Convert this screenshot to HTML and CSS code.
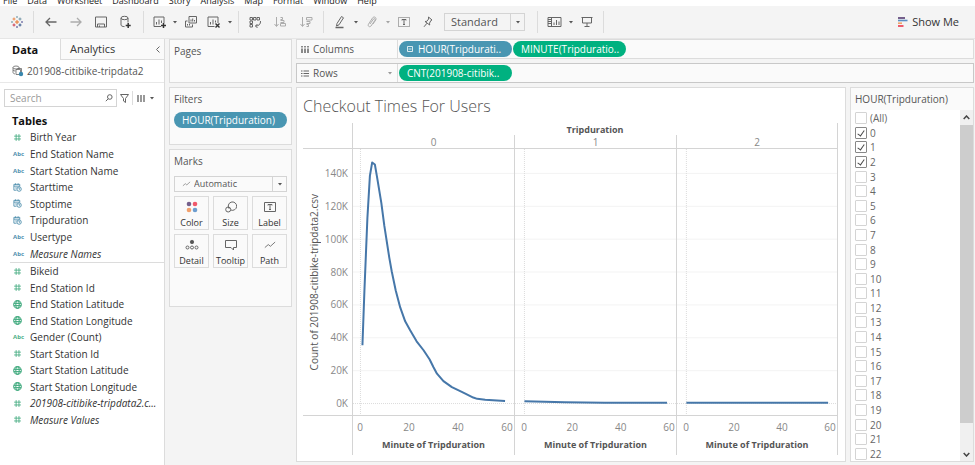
FILE: index.html
```html
<!DOCTYPE html>
<html lang="en">
<head>
    <meta charset="UTF-8">
    <meta name="viewport" content="width=device-width, initial-scale=1.0">
    <title>Checkout Times For Users</title>
    <link rel="stylesheet" href="styles.css">
</head>
<body>
    <!-- shared icons -->
    <svg class="icon-defs" aria-hidden="true">
        <symbol id="hash" viewBox="0 0 8 8"><path d="M2.8 1v6M5.3 1v6M1 2.8h6M1 5.3h6" stroke-width=".8"/></symbol>
        <symbol id="globe" viewBox="0 0 8 8"><circle cx="4" cy="4" r="3.4"/><ellipse cx="4" cy="4" rx="1.5" ry="3.4"/><path d="M.8 3h6.4M.8 5h6.4"/></symbol>
        <symbol id="date" viewBox="0 0 10 10"><path d="M4 8H1V1.5h6.5V4M1 3.5h6.5M2.8.4v1.8M5.7.4v1.8M2.5 5.5h1.8"/><circle cx="6.8" cy="6.8" r="2.4"/><path d="M6.8 5.5v1.4h1.1"/></symbol>
        <symbol id="caret" viewBox="0 0 4 3"><path d="M0 0h4L2 2.6z"/></symbol>
        <symbol id="line" viewBox="0 0 14 10"><path d="M1 8l4-3.5 2.5 2L13 1.5"/></symbol>
    </svg>

    <nav class="menu">
        <a href="#">File</a>
        <a href="#">Data</a>
        <a href="#">Worksheet</a>
        <a href="#">Dashboard</a>
        <a href="#">Story</a>
        <a href="#">Analysis</a>
        <a href="#">Map</a>
        <a href="#">Format</a>
        <a href="#">Window</a>
        <a href="#">Help</a>
    </nav>

    <header class="toolbar">
        <div class="group group-logo">
            <button aria-label="Start page"><svg width="12" height="12" viewBox="0 0 12 12">
                <path d="M6 4v4M4 6h4" stroke="#e8762d"/>
                <path d="M3 1.5v3M1.5 3h3" stroke="#e8762d" stroke-width=".8"/>
                <path d="M9 1.5v3M7.5 3h3" stroke="#5b879b" stroke-width=".8"/>
                <path d="M3 7.5v3M1.5 9h3" stroke="#c72037" stroke-width=".8"/>
                <path d="M9 7.5v3M7.5 9h3" stroke="#1f457e" stroke-width=".8"/>
                <path d="M6 0v2M5 1h2M0 6h2M1 5v2" stroke="#7199a6" stroke-width=".7"/>
                <path d="M6 10v2M5 11h2M10 6h2M11 5v2" stroke="#59569a" stroke-width=".7"/>
            </svg></button>
        </div>
        <div class="group group-file">
            <button aria-label="Undo"><svg width="12" height="10" viewBox="0 0 12 10"><path d="M5 1L1 5l4 4M1 5h10.5" stroke-width="1.3"/></svg></button>
            <button aria-label="Redo" class="off"><svg width="12" height="10" viewBox="0 0 12 10"><path d="M7 1l4 4-4 4M11 5H.5" stroke-width="1.3"/></svg></button>
            <button aria-label="Save"><svg width="12" height="12" viewBox="0 0 12 12"><path d="M.5 1h11v10H.5zM2.5 11V8h7v3M4.500 9.500V11"/></svg></button>
            <button aria-label="New data source"><svg width="12" height="14" viewBox="0 0 12 14"><ellipse cx="4.5" cy="3" rx="3.5" ry="1.7"/><path d="M1 3v7c0 .9 1.5 1.6 3.5 1.6M8 3v4.5"/><path d="M8.2 8v5M5.7 10.5h5" stroke="#333" stroke-width="1.5"/></svg></button>
        </div>
        <div class="group group-sheet">
            <button aria-label="New worksheet"><svg width="14" height="14" viewBox="0 0 14 14"><path d="M8 11.5H1V2h10v6M3.5 9.5V7M6 9.5V4.5M8.5 8V5.5"/><path d="M10.5 8v5M8 10.5h5" stroke="#333" stroke-width="1.5"/></svg></button>
            <button class="drop" aria-label="Worksheet options"><svg class="caret"><use href="#caret"/></svg></button>
            <button aria-label="Duplicate"><svg width="14" height="14" viewBox="0 0 14 14"><path d="M5 1.5h7.5V8H5zM7 6.5v-2M8.7 6.5v-3M10.5 6.5V5M3.5 6h-2v6h7V9.5M3.5 10.5V9M5.5 10.5V9"/></svg></button>
            <button aria-label="Clear sheet"><svg width="14" height="14" viewBox="0 0 14 14"><path d="M7.5 11.5H1V2h10v6M3.5 9.5V7M6 9.5V4.5M8.5 7.5v-2"/><path d="M8.5 8.5l4 4M12.5 8.5l-4 4" stroke="#333" stroke-width="1.4"/></svg></button>
            <button class="drop" aria-label="Clear options"><svg class="caret"><use href="#caret"/></svg></button>
        </div>
        <div class="group group-sort">
            <button aria-label="Swap rows and columns"><svg width="13" height="13" viewBox="0 0 13 13"><path d="M1 1.5h2.5V4H1zM4.500 1.5H7V4H4.500zM8 1.5h2.500V4H8zM1 5h2.500v2.500H1zM1 8.500h2.500V11H1zM11.500 5c.3 3-1.500 5-5 5M8.500 8l-2 2 2 2"/></svg></button>
            <button aria-label="Sort ascending" class="off"><svg width="13" height="12" viewBox="0 0 13 12"><path d="M2.5 1v9M.5 8l2 2.500 2-2.500M6.500 1.500h2v2h-2M6.500 4.500h3.500v2H6.500M6.500 7.500h5v2.500h-5z"/></svg></button>
            <button aria-label="Sort descending" class="off"><svg width="13" height="12" viewBox="0 0 13 12"><path d="M2.5 1v9M.5 8l2 2.500 2-2.500M6.500 10.500h2v-2h-2M6.500 7.500h3.500v-2H6.500M6.500 4h5.500V1.500H6.500z"/></svg></button>
        </div>
        <div class="group group-format">
            <button aria-label="Highlight"><svg width="12" height="14" viewBox="0 0 12 14"><path d="M3 8.5l4.500-7 2 1.300L5 9.800 2.500 11z"/><path d="M1.500 12.500h8" stroke-width="1.5"/></svg></button>
            <button class="drop" aria-label="Highlight options"><svg class="caret"><use href="#caret"/></svg></button>
            <button aria-label="Group members" class="off"><svg width="10" height="12" viewBox="0 0 10 12"><path d="M3 8l3.500-5c.8-1 2.300 0 1.500 1.200L4 10c-1.200 1.600-3.700.2-2.500-1.800L5.500 2C7-.2 10 1.500 8.700 4L6 8"/></svg></button>
            <button class="drop off" aria-label="Group options"><svg class="caret"><use href="#caret"/></svg></button>
            <button aria-label="Show mark labels"><svg width="12" height="12" viewBox="0 0 12 12"><path d="M.5 1.500h11v9H.5z" stroke-dasharray="1 1"/><path d="M4 4.500v-1h4v1M6 3.500v5M5 8.500h2"/></svg></button>
            <button aria-label="Fix axes"><svg width="10" height="12" viewBox="0 0 10 12"><path d="M5.500 1l3.500 3-1.200.6-1.300 2.600.2 1.800L2 5.500l1.800-.2 1.800-2.300zM4 7.200L1 10.800"/></svg></button>
            <div class="fit">
                <select aria-label="Fit"><option>Standard</option></select>
                <svg class="caret"><use href="#caret"/></svg>
            </div>
        </div>
        <div class="group group-view">
            <button aria-label="Show cards"><svg width="15" height="12" viewBox="0 0 15 12"><path d="M1 1.500h13v9H1zM4.500 1.500v9M1 3.500h3.500M1 5.500h3.500M1 7.500h3.500M7 9V6.500M9.500 9V4M12 9V5.500"/></svg></button>
            <button class="drop" aria-label="Card options"><svg class="caret"><use href="#caret"/></svg></button>
            <button aria-label="Presentation mode"><svg width="12" height="12" viewBox="0 0 12 12"><path d="M.5 1.500h11M1.500 1.500V7h9V1.500M6 7v3.500M3.500 10.500h5"/></svg></button>
        </div>
        <button class="show-me">
            <svg width="10" height="10" viewBox="0 0 10 10"><path d="M0 1h7" stroke="#75608c" stroke-width="2"/><path d="M0 3.500h9.500" stroke="#5b8ec4" stroke-width="1.600"/><path d="M0 6.200h4" stroke="#f0a36b" stroke-width="1.600"/><path d="M0 9h5.500" stroke="#ee5c6c" stroke-width="2"/></svg>
            Show Me
        </button>
    </header>

    <main class="workspace">
        <aside class="data-pane">
            <div class="tabs">
                <button class="tab active">Data</button>
                <button class="tab">Analytics <svg width="4" height="7" viewBox="0 0 4 7"><path d="M3.500.5l-3 3 3 3"/></svg></button>
            </div>
            <div class="source">
                <svg width="12" height="12" viewBox="0 0 12 12" stroke-width=".8"><ellipse cx="4" cy="2.500" rx="3" ry="1.500"/><path d="M1 2.500v5c0 .8 1 1.300 2 1.400M7 2.500V4M1 5c.5.800 1.500 1 2.500 1M4 4.500h4.500v5H4zM5.500 3.500h4v4"/><circle cx="9" cy="9" r="2.200" fill="#3a87ad" stroke="none"/></svg>
                201908-citibike-tripdata2
            </div>
            <div class="search">
                <div class="search-box">
                    <input type="text" placeholder="Search" aria-label="Search">
                    <svg width="8" height="8" viewBox="0 0 8 8"><circle cx="4.800" cy="3" r="2.300"/><path d="M3.200 4.800L.8 7.200"/></svg>
                </div>
                <button aria-label="Filter fields"><svg width="9" height="9" viewBox="0 0 9 9"><path d="M.5.5h8l-3 4v4l-2-1.500V4.500z"/></svg></button>
                <button class="view-as" aria-label="View as"><svg width="8" height="7" viewBox="0 0 8 7"><path d="M1 0v7M4 0v7M7 0v7" stroke-width="2"/></svg><svg class="caret"><use href="#caret"/></svg></button>
            </div>
            <h2>Tables</h2>
            <ul class="fields dimensions">
                <li><svg class="measure-icon"><use href="#hash"/></svg>Birth Year</li>
                <li><b>Abc</b>End Station Name</li>
                <li><b>Abc</b>Start Station Name</li>
                <li><svg><use href="#date"/></svg>Starttime</li>
                <li><svg><use href="#date"/></svg>Stoptime</li>
                <li><svg><use href="#date"/></svg>Tripduration</li>
                <li><b>Abc</b>Usertype</li>
                <li><b>Abc</b><i>Measure Names</i></li>
            </ul>
            <ul class="fields measures">
                <li><svg><use href="#hash"/></svg>Bikeid</li>
                <li><svg><use href="#hash"/></svg>End Station Id</li>
                <li><svg><use href="#globe"/></svg>End Station Latitude</li>
                <li><svg><use href="#globe"/></svg>End Station Longitude</li>
                <li><b>Abc</b>Gender (Count)</li>
                <li><svg><use href="#hash"/></svg>Start Station Id</li>
                <li><svg><use href="#globe"/></svg>Start Station Latitude</li>
                <li><svg><use href="#globe"/></svg>Start Station Longitude</li>
                <li><svg><use href="#hash"/></svg><i>201908-citibike-tripdata2.c...</i></li>
                <li><svg><use href="#hash"/></svg><i>Measure Values</i></li>
            </ul>
        </aside>

        <section class="cards">
            <div class="card pages">
                <h3>Pages</h3>
            </div>
            <div class="card filters">
                <h3>Filters</h3>
                <span class="pill blue">HOUR(Tripduration)</span>
            </div>
            <div class="card marks">
                <h3>Marks</h3>
                <div class="mark-type">
                    <svg class="type-icon" width="9" height="6"><use href="#line"/></svg>
                    <select aria-label="Mark type"><option>Automatic</option></select>
                    <svg class="caret"><use href="#caret"/></svg>
                </div>
                <div class="mark-buttons">
                    <button><svg width="12" height="12" viewBox="0 0 12 12" class="dots"><circle cx="3" cy="3" r="2.300" fill="#75608c"/><circle cx="9" cy="3" r="2.300" fill="#f0596b"/><circle cx="3" cy="9" r="2.300" fill="#f2a06c"/><circle cx="9" cy="9" r="2.300" fill="#6d9dcf"/></svg>Color</button>
                    <button><svg width="12" height="12" viewBox="0 0 12 12"><path d="M4.200 7.800A4.200 4.200 0 1 1 5.800 9"/><circle cx="3.200" cy="8.500" r="2.500"/></svg>Size</button>
                    <button><svg width="12" height="12" viewBox="0 0 12 12"><path d="M.5 1.500h11v9H.5zM4 4.500v-1h4v1M6 3.500v5M5 8.500h2"/></svg>Label</button>
                    <button><svg width="14" height="12" viewBox="0 0 14 12"><circle cx="7" cy="3" r="1.700" fill="#555"/><circle cx="2.500" cy="8.500" r="1.500"/><circle cx="7" cy="8.500" r="1.500"/><circle cx="11.500" cy="8.500" r="1.500"/></svg>Detail</button>
                    <button><svg width="12" height="12" viewBox="0 0 12 12"><path d="M.5 1.500h11v7h-3V11L6 8.500H.5z"/></svg>Tooltip</button>
                    <button><svg width="12" height="12" viewBox="0 0 14 10"><use href="#line"/></svg>Path</button>
                </div>
            </div>
        </section>

        <section class="content">
            <div class="shelf">
                <div class="shelf-name">
                    <svg width="8" height="7" viewBox="0 0 8 7"><path d="M1 0v1.500M1 2.500V7M4 0v1.500M4 2.500V7M7 0v1.500M7 2.500V7" stroke-width="1.5"/></svg>
                    Columns
                </div>
                <span class="pill blue"><svg width="6" height="6" viewBox="0 0 6 6"><path d="M.5.5h5v5h-5zM1.500 3h3" stroke-width=".8"/></svg>HOUR(Tripdurati..</span>
                <span class="pill green">MINUTE(Tripduratio..</span>
            </div>
            <div class="shelf rows">
                <div class="shelf-name">
                    <svg width="8" height="7" viewBox="0 0 8 7"><path d="M0 1h1.500M2.500 1H8M0 3.500h1.500M2.500 3.500H8M0 6h1.500M2.500 6H8" stroke-width="1.2"/></svg>
                    Rows
                    <svg class="caret"><use href="#caret"/></svg>
                </div>
                <span class="pill green">CNT(201908-citibik..</span>
            </div>

            <div class="view">
                <div class="sheet">
                    <h1>Checkout Times For Users</h1>
                    <div class="chart">
                        <div class="corner"></div>
                        <div class="column-field">Tripduration</div>
                        <div class="column-head">0</div>
                        <div class="column-head">1</div>
                        <div class="column-head">2</div>
                        <div class="y-axis">
                            <span class="y-title">Count of 201908-citibike-tripdata2.csv</span>
                            <div class="y-ticks">
                                <span>140K</span><span>120K</span><span>100K</span><span>80K</span><span>60K</span><span>40K</span><span>20K</span><span>0K</span>
                            </div>
                        </div>
                        <div class="pane">
                            <svg viewBox="0 0 162 267" preserveAspectRatio="none">
                                <path class="grid" d="M0 24.500h162M0 57.500h162M0 90.500h162M0 123.500h162M0 156.500h162M0 189.500h162M0 222.500h162"/>
                                <path class="zero" d="M0 255.500h162M7.500 0v267"/>
                                <path class="trend" d="M9.500 197L11.500 142 14.500 69 17 27 19.300 13.500 22 15.500 24.500 30 28.500 54 31.500 77 36.500 109 39 123 43 142 47.500 159 52.500 173 57.500 182 64 193 71 202 77 211 81 219 84.500 225.500 91 233 99.500 239 111 244.500 121 249.500 125 250.800 133 251.800 153 253"/>
                            </svg>
                        </div>
                        <div class="pane">
                            <svg viewBox="0 0 162 267" preserveAspectRatio="none">
                                <path class="grid" d="M0 24.500h162M0 57.500h162M0 90.500h162M0 123.500h162M0 156.500h162M0 189.500h162M0 222.500h162"/>
                                <path class="zero" d="M0 255.500h162M9.500 0v267"/>
                                <path class="trend" d="M9.500 253.300L50 254.200 90 254.600 153 254.800"/>
                            </svg>
                        </div>
                        <div class="pane">
                            <svg viewBox="0 0 162 267" preserveAspectRatio="none">
                                <path class="grid" d="M0 24.500h162M0 57.500h162M0 90.500h162M0 123.500h162M0 156.500h162M0 189.500h162M0 222.500h162"/>
                                <path class="zero" d="M0 255.500h162M9.500 0v267"/>
                                <path class="trend" d="M9.500 254.800H153"/>
                            </svg>
                        </div>
                        <div class="x-blank"></div>
                        <div class="x-axis">
                            <div class="x-ticks"><span>0</span><span>20</span><span>40</span><span>60</span></div>
                            Minute of Tripduration
                        </div>
                        <div class="x-axis">
                            <div class="x-ticks"><span>0</span><span>20</span><span>40</span><span>60</span></div>
                            Minute of Tripduration
                        </div>
                        <div class="x-axis">
                            <div class="x-ticks"><span>0</span><span>20</span><span>40</span><span>60</span></div>
                            Minute of Tripduration
                        </div>
                    </div>
                </div>

                <div class="quick-filter">
                    <h3>HOUR(Tripduration)</h3>
                    <div class="filter-body">
                        <div class="options">
                            <label><input type="checkbox">(All)</label>
                            <label><input type="checkbox" checked>0</label>
                            <label><input type="checkbox" checked>1</label>
                            <label><input type="checkbox" checked>2</label>
                            <label><input type="checkbox">3</label>
                            <label><input type="checkbox">4</label>
                            <label><input type="checkbox">5</label>
                            <label><input type="checkbox">6</label>
                            <label><input type="checkbox">7</label>
                            <label><input type="checkbox">8</label>
                            <label><input type="checkbox">9</label>
                            <label><input type="checkbox">10</label>
                            <label><input type="checkbox">11</label>
                            <label><input type="checkbox">12</label>
                            <label><input type="checkbox">13</label>
                            <label><input type="checkbox">14</label>
                            <label><input type="checkbox">15</label>
                            <label><input type="checkbox">16</label>
                            <label><input type="checkbox">17</label>
                            <label><input type="checkbox">18</label>
                            <label><input type="checkbox">19</label>
                            <label><input type="checkbox">20</label>
                            <label><input type="checkbox">21</label>
                            <label><input type="checkbox">22</label>
                        </div>
                        <div class="scrollbar">
                            <svg width="7" height="5" viewBox="0 0 7 5"><path d="M.7 4l2.800-3 2.800 3"/></svg>
                            <div class="thumb"></div>
                            <svg width="7" height="5" viewBox="0 0 7 5"><path d="M.7 1l2.800 3 2.800-3"/></svg>
                        </div>
                    </div>
                </div>
            </div>
        </section>
    </main>
</body>
</html>
```
FILE: styles.css
```css
* {
    box-sizing: border-box;
}
body {
    margin: 0;
    height: 100vh;
    display: flex;
    flex-direction: column;
    overflow: hidden;
    background: #f4f4f4;
    color: #333;
    font-family: "Open Sans", "Noto Sans", sans-serif;
    font-size: 10px;
    line-height: 14px;
}
h1, h2, h3, ul {
    margin: 0;
    padding: 0;
    font-weight: normal;
}
h3 {
    font-size: 10px;
}
button, input, select {
    font: inherit;
    color: inherit;
    margin: 0;
    padding: 0;
    border: none;
    background: none;
}
svg {
    fill: none;
    stroke: #666;
    flex: none;
}
.icon-defs {
    position: absolute;
    width: 0;
    height: 0;
}
.caret {
    width: 4px;
    height: 3px;
    fill: #555;
    stroke: none;
}

/* menu */
.menu {
    height: 6px;
    flex: none;
    display: flex;
    align-items: flex-end;
    gap: 10px;
    padding-left: 3px;
    overflow: hidden;
    background: #fff;
    font-size: 9px;
    line-height: 10px;
}
.menu a {
    color: #222;
    text-decoration: none;
}

/* toolbar */
.toolbar {
    height: 33px;
    flex: none;
    display: flex;
    align-items: center;
    border-bottom: 1px solid #e6e6e6;
}
.group {
    height: 22px;
    display: flex;
    align-items: center;
    padding: 0 4px;
    border-right: 1px solid #dcdcdc;
}
.group button {
    flex: 1;
    height: 20px;
    display: flex;
    align-items: center;
    justify-content: center;
}
.group .drop {
    flex: none;
    width: 8px;
}
.off svg {
    opacity: 0.5;
}
.group-logo {
    width: 34px;
}
.group-file {
    width: 110px;
}
.group-sheet {
    width: 95px;
}
.group-sort {
    width: 85px;
}
.group-format {
    width: 214px;
}
.group-view {
    width: 66px;
}
.fit {
    position: relative;
    width: 81px;
    margin: 0 8px 0 4px;
}
.fit select {
    appearance: none;
    width: 100%;
    height: 18px;
    padding-left: 6px;
    border: 1px solid #d4d4d4;
    font-size: 11px;
    color: #555;
    background: linear-gradient(#d4d4d4, #d4d4d4) right 13px top / 1px 100% no-repeat;
}
.fit .caret {
    position: absolute;
    right: 5px;
    top: 8px;
}
.show-me {
    margin-left: auto;
    margin-right: 16px;
    display: flex;
    align-items: center;
    gap: 4px;
    font-size: 11px;
}

/* layout */
.workspace {
    flex: 1;
    min-height: 0;
    display: flex;
    gap: 4px;
    padding-right: 1px;
}

/* data pane */
.data-pane {
    width: 165px;
    flex: none;
    background: #fff;
    border-right: 1px solid #dcdcdc;
}
.tabs {
    display: flex;
    height: 21px;
}
.tab {
    flex: 1;
    display: flex;
    align-items: center;
    justify-content: space-between;
    padding: 0 4px 0 9px;
    border-left: 1px solid #dcdcdc;
    border-bottom: 1px solid #dcdcdc;
    background: #fafafa;
    font-size: 11px;
}
.tab.active {
    flex: none;
    width: 60px;
    padding-left: 12px;
    border: none;
    background: #fff;
    font-weight: bold;
    color: #111;
}
.source {
    height: 23px;
    display: flex;
    align-items: center;
    gap: 3px;
    padding-left: 12px;
    border-bottom: 1px solid #e8e8e8;
    color: #555;
    white-space: nowrap;
}
.search {
    display: flex;
    align-items: center;
    gap: 3px;
    padding: 6px 0 5px 4px;
}
.search-box {
    position: relative;
    width: 113px;
}
.search-box input {
    display: block;
    width: 100%;
    height: 18px;
    padding-left: 5px;
    border: 1px solid #d4d4d4;
    background: #fff;
}
.search-box input::placeholder {
    color: #999;
    opacity: 1;
}
.search-box svg {
    position: absolute;
    right: 4px;
    top: 5px;
}
.search button {
    display: flex;
    align-items: center;
    height: 14px;
}
.search .view-as {
    gap: 5px;
    padding-left: 4px;
    border-left: 1px solid #dcdcdc;
}
.view-as svg:first-child {
    stroke: #999;
}
.data-pane h2 {
    padding-left: 12px;
    font-size: 11px;
    font-weight: bold;
    color: #111;
    line-height: 17px;
}
.fields {
    display: grid;
    grid-auto-rows: 1fr;
    list-style: none;
    margin-left: 10px;
}
.fields li {
    display: flex;
    align-items: center;
    min-height: 0;
    white-space: nowrap;
}
.fields svg {
    width: 9px;
    height: 9px;
    margin: 0 8px 0 3px;
    stroke: #4f8fae;
}
.fields b {
    width: 20px;
    padding-left: 3px;
    font-size: 6px;
    color: #4f8fae;
}
.dimensions {
    height: 134px;
    border-bottom: 1px solid #dcdcdc;
}
.measures {
    height: 165px;
}
.fields .measure-icon, .measures svg {
    stroke: #4caf86;
}
.measures b {
    color: #4caf86;
}

/* cards */
.cards {
    width: 123px;
    flex: none;
    display: flex;
    flex-direction: column;
    gap: 4px;
}
.card {
    padding: 4px;
    background: #fafafa;
    border: 1px solid #dcdcdc;
}
.card h3 {
    color: #555;
}
.pages {
    height: 44px;
}
.filters {
    height: 58px;
}
.marks {
    height: 158px;
}
.pill {
    display: flex;
    align-items: center;
    height: 16px;
    padding: 0 8px;
    border-radius: 8px;
    color: #fff;
    white-space: nowrap;
}
.pill svg {
    stroke: #fff;
    margin-right: 5px;
}
.blue {
    background: #4996b2;
}
.green {
    background: #00b180;
}
.filters .pill {
    margin-top: 6px;
}
.mark-type {
    position: relative;
    margin-top: 8px;
}
.mark-type select {
    appearance: none;
    display: block;
    width: 100%;
    height: 16px;
    padding-left: 19px;
    border: 1px solid #d4d4d4;
    font-size: 9px;
    color: #555;
    background: linear-gradient(#d4d4d4, #d4d4d4) right 13px top / 1px 100% no-repeat;
}
.mark-type .type-icon {
    position: absolute;
    left: 8px;
    top: 5px;
}
.mark-type .caret {
    position: absolute;
    right: 5px;
    top: 7px;
}
.mark-buttons {
    display: grid;
    grid-template-columns: repeat(3, 1fr);
    gap: 4px;
    margin-top: 4px;
}
.mark-buttons button {
    height: 34px;
    display: flex;
    flex-direction: column;
    align-items: center;
    justify-content: flex-end;
    gap: 3px;
    border: 1px solid #dcdcdc;
    font-size: 9px;
    line-height: 13px;
}
.dots {
    stroke: none;
}

/* shelves */
.content {
    flex: 1;
    min-width: 0;
    display: flex;
    flex-direction: column;
    gap: 4px;
    padding-bottom: 3px;
}
.shelf {
    height: 20px;
    flex: none;
    display: flex;
    align-items: center;
    gap: 1px;
    background: #fafafa;
    border: 1px solid #dcdcdc;
}
.rows {
    border-color: #c8c8c8;
}
.shelf-name {
    width: 101px;
    height: 100%;
    display: flex;
    align-items: center;
    gap: 4px;
    padding: 0 5px 0 4px;
    border-right: 1px solid #dcdcdc;
    color: #555;
}
.shelf-name .caret {
    margin-left: auto;
    fill: #999;
}
.shelf .pill {
    width: 113px;
}

/* sheet */
.view {
    flex: 1;
    min-height: 0;
    display: flex;
    gap: 4px;
}
.sheet {
    flex: 1;
    min-width: 0;
    display: flex;
    flex-direction: column;
    padding: 6px 7px 6px 6px;
    background: #fff;
    border: 1px solid #dcdcdc;
}
h1 {
    font-size: 16px;
    font-weight: 300;
    line-height: 24px;
    color: #555;
    margin-bottom: 5px;
}
.chart {
    flex: 1;
    min-height: 0;
    display: grid;
    grid-template-columns: 49px repeat(3, 1fr);
    grid-template-rows: 12px 14px 1fr 40px;
    color: #888;
}
.corner {
    grid-row: span 2;
    border-bottom: 1px solid #d4d4d4;
}
.column-field {
    grid-column: span 3;
    border-left: 1px solid #d4d4d4;
    border-right: 1px solid #d4d4d4;
    line-height: 13px;
}
.column-field, .x-axis {
    font-size: 9px;
    font-weight: bold;
    text-align: center;
    color: #555;
}
.column-head {
    text-align: center;
    border-bottom: 1px solid #d4d4d4;
}
.column-head, .pane, .x-axis {
    border-left: 1px solid #d4d4d4;
}
.column-head:nth-child(5), .pane:nth-child(9), .x-axis:last-child {
    border-right: 1px solid #d4d4d4;
}
.y-axis {
    display: flex;
    justify-content: space-between;
    align-items: center;
    min-height: 0;
}
.y-title {
    writing-mode: vertical-rl;
    transform: rotate(180deg);
    margin-left: 4px;
    color: #555;
    white-space: nowrap;
}
.y-ticks {
    height: 100%;
    display: flex;
    flex-direction: column;
    justify-content: space-between;
    padding: 17px 4px 5px 0;
    text-align: right;
}
.pane {
    min-width: 0;
    min-height: 0;
}
.pane svg {
    display: block;
    width: 100%;
    height: 100%;
}
.pane path {
    vector-effect: non-scaling-stroke;
}
.grid {
    stroke: #f3f3f3;
}
.zero {
    stroke: #dcdcdc;
    stroke-dasharray: 1 1;
}
.trend {
    stroke: #4677a9;
    stroke-width: 2;
    stroke-linejoin: round;
}
.x-blank, .x-axis {
    border-top: 1px solid #d4d4d4;
}
.x-ticks {
    display: flex;
    justify-content: space-between;
    padding: 4px 0 4px 2px;
    font-size: 10px;
    font-weight: normal;
    color: #888;
}
.x-blank + .x-axis .x-ticks {
    padding-left: 0;
}
.x-ticks span {
    width: 14px;
}

/* quick filter */
.quick-filter {
    width: 124px;
    flex: none;
    display: flex;
    flex-direction: column;
    background: #fff;
    border: 1px solid #dcdcdc;
}
.quick-filter h3 {
    padding: 4px;
    background: #fafafa;
    color: #555;
}
.filter-body {
    flex: 1;
    min-height: 0;
    display: flex;
}
.options {
    flex: 1;
    display: grid;
    grid-auto-rows: 1fr;
    padding: 1px 4px 0;
}
.options label {
    display: flex;
    align-items: center;
    gap: 3px;
    min-height: 0;
    color: #666;
}
.options input {
    appearance: none;
    width: 12px;
    height: 12px;
    border: 1px solid #d4d4d4;
    border-radius: 1px;
    background: #fff;
}
.options input:checked {
    border-color: #888;
}
.options input:checked::after {
    content: "";
    display: block;
    width: 3px;
    height: 6px;
    margin: 1px 0 0 3px;
    border: solid #444;
    border-width: 0 1px 1px 0;
    transform: rotate(35deg);
}
.scrollbar {
    width: 13px;
    display: flex;
    flex-direction: column;
    align-items: center;
    gap: 5px;
    padding: 5px 0 4px;
    background: #f0f0f0;
}
.scrollbar svg {
    stroke: #444;
    stroke-width: 1.5;
}
.thumb {
    width: 100%;
    height: 298px;
    margin-bottom: auto;
    background: #cdcdcd;
}
```
